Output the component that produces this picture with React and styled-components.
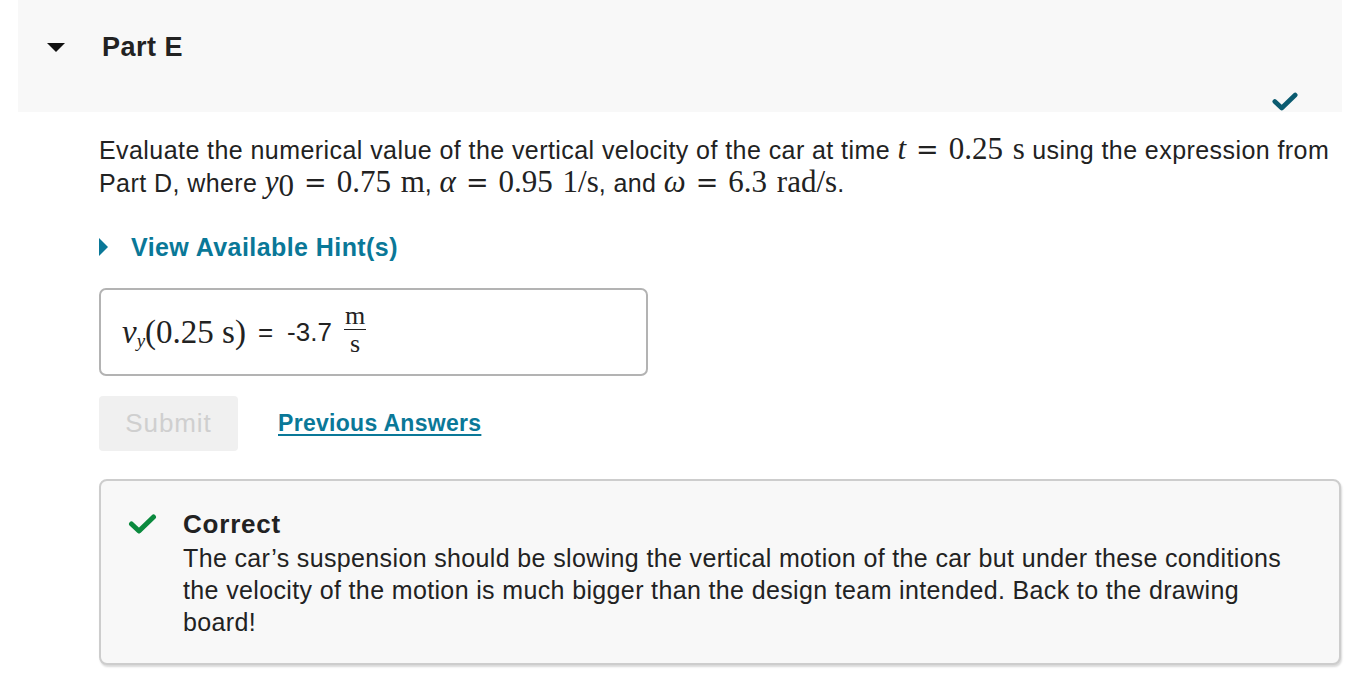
import React from 'react';
import styled, { createGlobalStyle } from 'styled-components';

const GlobalStyle = createGlobalStyle`
  body {
    margin: 0;
    background: #ffffff;
    font-family: "Liberation Sans", Arial, sans-serif;
    color: #222;
  }
`;

const Page = styled.div`
  width: 1370px;
  height: 698px;
  padding: 0 28px 0 18px;
  box-sizing: border-box;
  overflow: hidden;
`;

const Header = styled.div`
  height: 112px;
  background: #f8f8f8;
  display: flex;
  justify-content: space-between;
`;

const TitleRow = styled.div`
  display: flex;
  align-items: center;
  gap: 37px;
  padding: 31px 0 0 29px;
  height: 32px;
`;

const Caret = styled.span`
  width: 0;
  height: 0;
  border-left: ${p => (p.$dir === 'down' ? '9px solid transparent' : `9px solid ${p.$color}`)};
  border-right: ${p => (p.$dir === 'down' ? '9px solid transparent' : '0')};
  border-top: ${p => (p.$dir === 'down' ? `9px solid ${p.$color}` : '9px solid transparent')};
  border-bottom: ${p => (p.$dir === 'down' ? '0' : '9px solid transparent')};
`;

const PartTitle = styled.h2`
  margin: 0;
  font-size: 27px;
  letter-spacing: 0.5px;
  font-weight: bold;
  color: #222;
`;

const HeaderCheck = styled.div`
  align-self: flex-end;
  margin: 0 44px 1px 0;
  display: flex;
`;

const Body = styled.div`
  padding: 22px 0 0 81px;
`;

const Question = styled.p`
  margin: 0;
  font-size: 25px;
  letter-spacing: 0.43px;
  line-height: 33px;
  color: #222;
`;

const M = styled.span`
  font-family: "Liberation Serif", "DejaVu Serif", serif;
  font-size: 31px;
  line-height: 0.8;
  letter-spacing: 0;
  word-spacing: 2px;
  font-style: ${p => (p.$i ? 'italic' : 'normal')};
`;

const Op = styled.span`
  font-family: "DejaVu Serif", "Liberation Serif", serif;
  font-size: 27px;
  line-height: 0.8;
  letter-spacing: 0;
  padding: 0 10px;
`;

const Sub = styled.sub`
  font-size: 19px;
  vertical-align: -4px;
  line-height: 0;
`;

const HintToggle = styled.div`
  display: flex;
  align-items: center;
  gap: 23px;
  margin-top: 34px;
  height: 26px;
  color: #0a7898;
  font-size: 25px;
  letter-spacing: 0.43px;
  font-weight: bold;
`;

const AnswerBox = styled.div`
  width: 549px;
  height: 88px;
  margin-top: 28px;
  border: 2px solid #b3b3b3;
  border-radius: 7px;
  box-sizing: border-box;
  display: flex;
  align-items: center;
  padding: 0 0 0 21px;
`;

const Expr = styled.span`
  font-family: "Liberation Serif", "DejaVu Serif", serif;
  font-size: 33px;
  color: #222;
  margin-right: 12px;
`;

const Plain = styled.span`
  font-size: 26px;
  color: #222;
  margin-right: ${p => p.$gap || 0}px;
`;

const Frac = styled.span`
  display: inline-flex;
  flex-direction: column;
  align-items: center;
  font-family: "Liberation Serif", "DejaVu Serif", serif;
  font-size: 26px;
  line-height: 22px;
  margin-top: -4px;
  span:first-child {
    border-bottom: 1.5px solid #222;
    padding: 0 1px 2px;
  }
  span:last-child {
    padding-top: 3px;
  }
`;

const Actions = styled.div`
  display: flex;
  align-items: center;
  gap: 40px;
  margin-top: 20px;
`;

const SubmitButton = styled.button`
  width: 139px;
  height: 55px;
  border: none;
  border-radius: 4px;
  background: #f0f0f0;
  color: #cfcfcf;
  font-family: "Liberation Sans", Arial, sans-serif;
  font-size: 26px;
  letter-spacing: 0.9px;
`;

const PrevLink = styled.a`
  color: #0a7898;
  font-size: 23px;
  letter-spacing: 0.3px;
  font-weight: bold;
  text-decoration: underline;
  text-underline-offset: 3px;
  text-decoration-thickness: 2px;
`;

const Feedback = styled.div`
  margin-top: 28px;
  width: 1242px;
  height: 186px;
  box-sizing: border-box;
  background: #f8f8f8;
  border: 2px solid #cdcdcd;
  border-radius: 8px;
  box-shadow: 1px 2px 2px rgba(0, 0, 0, 0.15);
  display: flex;
  gap: 26px;
  padding: 27px 26px 0 27px;
`;

const FeedbackCheck = styled.div`
  padding-top: 6px;
`;

const FeedbackTitle = styled.div`
  font-size: 26px;
  letter-spacing: 0.8px;
  font-weight: bold;
  line-height: 32px;
  color: #222;
`;

const FeedbackText = styled.p`
  margin: 2px 0 0;
  font-size: 25px;
  letter-spacing: 0.36px;
  line-height: 32px;
  color: #222;
`;

const Check = ({ color, w, h }) => (
  <svg width={w} height={h} viewBox="0 0 28 20">
    <path d="M3 10 L10.5 17 L25 3" fill="none" stroke={color} strokeWidth="5" strokeLinecap="round" strokeLinejoin="round" />
  </svg>
);

export default function App() {
  return (
    <>
      <GlobalStyle />
      <Page>
        <Header>
          <TitleRow>
            <Caret $dir="down" $color="#111" />
            <PartTitle>Part E</PartTitle>
          </TitleRow>
          <HeaderCheck>
            <Check color="#0b5b70" w={26} h={19} />
          </HeaderCheck>
        </Header>
        <Body>
          <Question>
            Evaluate the numerical value of the vertical velocity of the car at time{' '}
            <M $i>t</M>
            <Op>=</Op>
            <M>0.25 s</M> using the expression from Part D, where{' '}
            <M $i>y</M><Sub><M>0</M></Sub>
            <Op>=</Op>
            <M>0.75 m</M>, <M $i>α</M>
            <Op>=</Op>
            <M>0.95 1/s</M>, and <M $i>ω</M>
            <Op>=</Op>
            <M>6.3 rad/s</M>.
          </Question>

          <HintToggle>
            <Caret $dir="right" $color="#0a7898" />
            <span>View Available Hint(s)</span>
          </HintToggle>

          <AnswerBox>
            <Expr>
              <i>v</i>
              <Sub><i>y</i></Sub>(0.25 s)
            </Expr>
            <Plain $gap={14}>=</Plain>
            <Plain $gap={12}>-3.7</Plain>
            <Frac>
              <span>m</span>
              <span>s</span>
            </Frac>
          </AnswerBox>

          <Actions>
            <SubmitButton disabled>Submit</SubmitButton>
            <PrevLink href="#">Previous Answers</PrevLink>
          </Actions>

          <Feedback>
            <FeedbackCheck>
              <Check color="#0b8a3e" w={29} h={20} />
            </FeedbackCheck>
            <div>
              <FeedbackTitle>Correct</FeedbackTitle>
              <FeedbackText>
                The car’s suspension should be slowing the vertical motion of the car but under these conditions the velocity of the motion is much bigger than the design team intended. Back to the drawing board!
              </FeedbackText>
            </div>
          </Feedback>
        </Body>
      </Page>
    </>
  );
}
